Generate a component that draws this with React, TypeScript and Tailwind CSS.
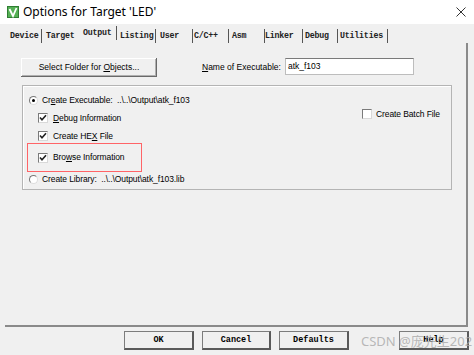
import type { ReactNode } from "react";

const ui = { fontFamily: '"Liberation Sans", Arial, sans-serif' };
const mono = { fontFamily: '"Liberation Mono", "Courier New", monospace' };

const tabs = [
  { label: "Device", w: 36, pl: 4, sep: true },
  { label: "Target", w: 37, pl: 4, sep: false },
  { label: "Output", w: 38, pl: 4, sep: true, active: true },
  { label: "Listing", w: 39, pl: 3, sep: true },
  { label: "User", w: 37, pl: 4, sep: true },
  { label: "C/C++", w: 36, pl: 1, sep: true },
  { label: "Asm", w: 36, pl: 3, sep: true },
  { label: "Linker", w: 38, pl: 0, sep: true },
  { label: "Debug", w: 35, pl: 2, sep: true },
  { label: "Utilities", w: 50, pl: 2, sep: true },
];

const Key = ({ children }: { children: ReactNode }) => (
  <span className="underline underline-offset-[1px]">{children}</span>
);

const Check = ({ on = true }: { on?: boolean }) => (
  <span className="w-[10px] h-[10px] bg-white border border-[#7a7a7a] border-b-[#d8d8d8] border-r-[#d8d8d8] flex items-center justify-center shrink-0">
    {on && (
      <svg width="8" height="8" viewBox="0 0 8 8">
        <path d="M1 3.5 L3 5.8 L7 1.2" stroke="#222" strokeWidth="1.6" fill="none" />
      </svg>
    )}
  </span>
);

const Radio = ({ on = false }: { on?: boolean }) => (
  <span className="w-[9px] h-[9px] rounded-full bg-white border border-[#777] border-b-[#ddd] border-r-[#ddd] flex items-center justify-center shrink-0">
    {on && <span className="w-[3px] h-[3px] rounded-full bg-black" />}
  </span>
);

const DlgButton = ({ label, w = 70 }: { label: string; w?: number }) => (
  <button
    className="h-[19px] bg-[#f0f0f0] border border-[#7c7c7c] border-r-2 border-b-2 border-r-[#5a5a5a] border-b-[#5a5a5a] text-[8.5px] font-bold text-black flex items-center justify-center"
    style={{ ...mono, width: w }}
  >
    {label}
  </button>
);

export default function App() {
  return (
    <div className="relative w-[474px] h-[355px] bg-[#f0f0f0] flex flex-col overflow-hidden text-black" style={ui}>
      {/* title bar */}
      <div className="h-[24px] bg-white flex items-center pl-[7px] shrink-0">
        <svg width="12" height="12" viewBox="0 0 12 12">
          <rect x="0" y="0" width="12" height="12" fill="#2f7d32" />
          <rect x="1" y="1" width="10" height="10" fill="#55b055" />
          <path d="M2.5 3 L6 10 L9.5 2" stroke="#fff" strokeWidth="1.8" fill="none" />
        </svg>
        <span className="ml-[4px] text-[12px] leading-none" style={{ fontFamily: '"Noto Sans", sans-serif' }}>
          Options for Target 'LED'
        </span>
        <svg className="ml-auto mr-[8px]" width="10" height="10" viewBox="0 0 10 10">
          <path d="M0.5 0.5 L9.5 9.5 M9.5 0.5 L0.5 9.5" stroke="#333" strokeWidth="1" />
        </svg>
      </div>

      {/* tabs */}
      <div className="h-[19px] flex items-end pl-[6px] shrink-0">
        {tabs.map((t) => (
          <div
            key={t.label}
            className={`h-[14px] flex items-center text-[8.3px] font-bold tracking-tight text-[#222] ${
              t.sep ? "border-r border-[#555]" : ""
            } ${t.active ? "mb-[3px]" : ""}`}
            style={{ ...mono, width: t.w, paddingLeft: t.pl }}
          >
            {t.label}
          </div>
        ))}
      </div>

      {/* panel */}
      <div className="ml-[5px] w-[463px] h-[284px] border-r-2 border-b-2 border-[#8a8a8a] flex flex-col shrink-0">
        <div className="mt-[15px] flex items-start">
          <button className="ml-[16px] w-[136px] h-[19px] bg-[#f0f0f0] text-[8.5px] flex items-center justify-center shadow-[inset_-1px_-1px_0_#696969,inset_1px_1px_0_#fff,inset_-2px_-2px_0_#b0b0b0]">
            <span>
              Select Folder for <Key>O</Key>bjects...
            </span>
          </button>
          <span className="ml-[45px] mt-[3px] text-[8.5px] leading-[12px]">
            <Key>N</Key>ame of Executable:
          </span>
          <div className="ml-[4px] w-[129px] h-[17px] bg-white border border-[#bdbdbd] border-t-[#7a7a7a] flex items-center pl-[2px] text-[8.5px]">
            atk_f103
          </div>
        </div>

        {/* group */}
        <div className="ml-[17px] mt-[8px] w-[430px] h-[105px] border border-[#b4b4b4] shadow-[inset_1px_1px_0_#fff] flex text-[8.5px] tracking-[-0.1px]">
          <div className="w-[339px] flex flex-col pt-[7px]">
            <div className="h-[14px] flex items-center pl-[6px]">
              <Radio on />
              <span className="ml-[4px]">
                Cr<Key>e</Key>ate Executable:&nbsp; ..\..\Output\atk_f103
              </span>
            </div>
            <div className="mt-[4px] h-[14px] flex items-center pl-[15px]">
              <Check />
              <span className="ml-[5px]">
                <Key>D</Key>ebug Information
              </span>
            </div>
            <div className="mt-[4px] h-[14px] flex items-center pl-[15px]">
              <Check />
              <span className="ml-[5px]">
                Create HE<Key>X</Key> File
              </span>
            </div>
            <div className="ml-[4px] w-[115px] h-[29px] border border-solid border-red-400 flex items-center pl-[10px]">
              <Check />
              <span className="ml-[5px]">
                Bro<Key>w</Key>se Information
              </span>
            </div>
            <div className="h-[14px] flex items-center pl-[6px]">
              <Radio />
              <span className="ml-[4px]">Create Library:&nbsp; ..\..\Output\atk_f103.lib</span>
            </div>
          </div>
          <div className="flex-1 pt-[21px]">
            <div className="h-[14px] flex items-center">
              <Check on={false} />
              <span className="ml-[4px]">Create Batch File</span>
            </div>
          </div>
        </div>
      </div>

      {/* buttons */}
      <div className="flex items-start pt-[4px] pl-[124px]">
        <DlgButton label="OK" w={70} />
        <div className="ml-[8px]">
          <DlgButton label="Cancel" w={69} />
        </div>
        <div className="ml-[8px]">
          <DlgButton label="Defaults" w={70} />
        </div>
        <div className="ml-[50px]">
          <DlgButton label="Help" w={70} />
        </div>
      </div>

      <span
        className="absolute left-[361px] top-[335px] text-[13px] leading-none text-[#a8a8a8]/80 whitespace-nowrap"
        style={{ fontFamily: '"Noto Sans", "Noto Sans CJK SC", sans-serif' }}
      >
        CSDN @庞先生202
      </span>
    </div>
  );
}
